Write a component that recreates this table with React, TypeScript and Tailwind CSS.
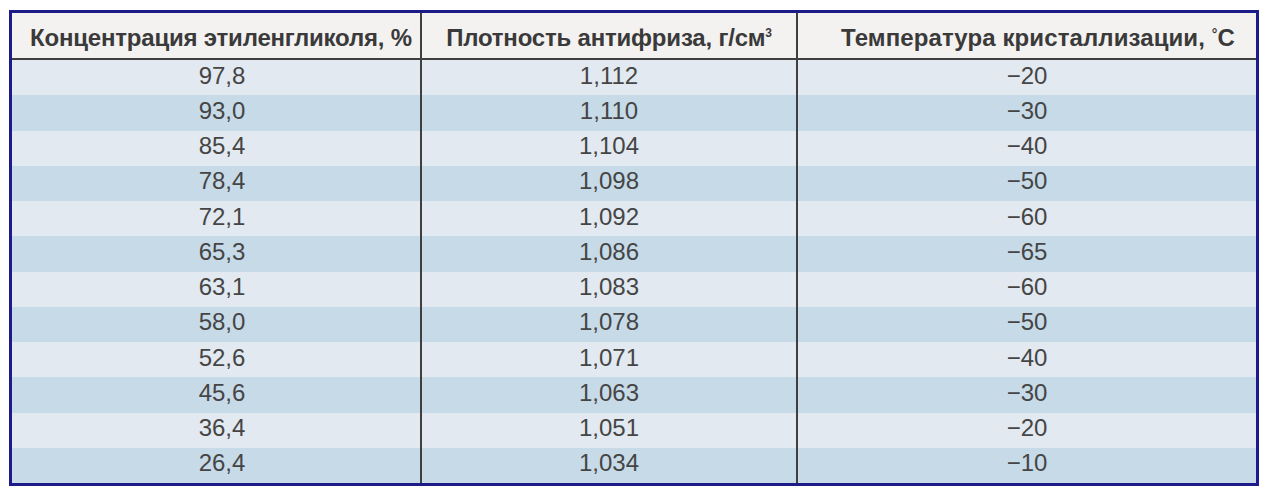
const rows: [string, string, string][] = [
  ["97,8", "1,112", "−20"],
  ["93,0", "1,110", "−30"],
  ["85,4", "1,104", "−40"],
  ["78,4", "1,098", "−50"],
  ["72,1", "1,092", "−60"],
  ["65,3", "1,086", "−65"],
  ["63,1", "1,083", "−60"],
  ["58,0", "1,078", "−50"],
  ["52,6", "1,071", "−40"],
  ["45,6", "1,063", "−30"],
  ["36,4", "1,051", "−20"],
  ["26,4", "1,034", "−10"],
];

const font = { fontFamily: "'Liberation Sans', Arial, sans-serif" };
const cell = "flex items-center justify-center pb-[4px]";

export default function App() {
  return (
    <div className="h-[496px] w-[1268px] bg-white pl-[9px] pt-[10px]" style={font}>
      <div className="w-[1250px] border-[3px] border-[#1d1b8a]">
        <div className="flex h-[47px] border-b-2 border-[#3f3f3f] bg-[#f4f2f1] text-[24px] font-bold tracking-[-0.2px] text-[#3a3a3a]">
          <div className="flex w-[410px] items-center justify-center border-r-2 border-[#3f3f3f] pt-[4px] pl-[10px]">
            <span>Концентрация этиленгликоля, %</span>
          </div>
          <div className="flex w-[376px] items-center justify-center border-r-2 border-[#3f3f3f] pt-[4px]">
            <span>
              Плотность антифриза, г/см<sup className="-top-[0.75em] text-[12px]">3</sup>
            </span>
          </div>
          <div className="flex flex-1 items-center justify-center pl-[22px] pt-[4px] tracking-[0.1px]">
            <span>
              Температура кристаллизации, <sup className="-top-[0.45em] text-[14px]">°</sup>C
            </span>
          </div>
        </div>
        {rows.map((r, i) => (
          <div
            key={i}
            className={
              "flex h-[35.25px] text-[24px] leading-none text-[#454545] " +
              (i % 2 === 0 ? "bg-[#e2e9f0]" : "bg-[#c7dae8]")
            }
          >
            <div className={cell + " w-[410px] border-r-2 border-[#3f3f3f] pl-[12px]"}>{r[0]}</div>
            <div className={cell + " w-[376px] border-r-2 border-[#3f3f3f]"}>{r[1]}</div>
            <div className={cell + " flex-1"}>{r[2]}</div>
          </div>
        ))}
      </div>
    </div>
  );
}
